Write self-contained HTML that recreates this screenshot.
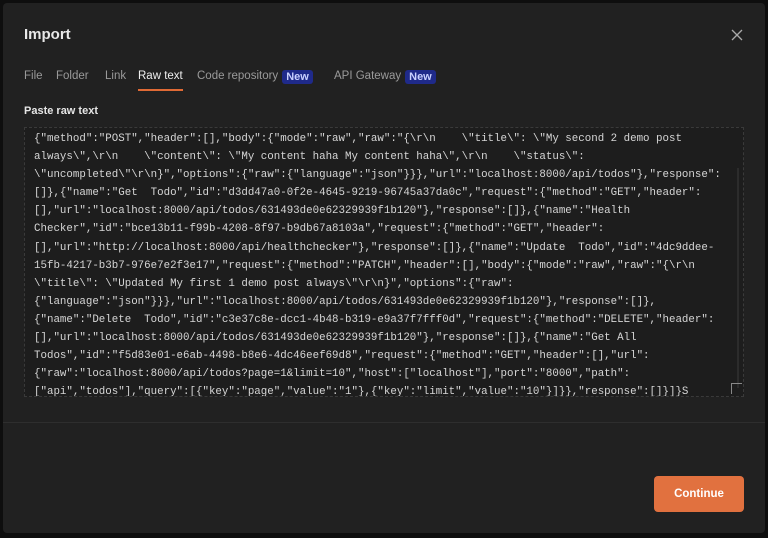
<!DOCTYPE html>
<html><head><meta charset="utf-8"><style>
html,body{margin:0;padding:0;width:768px;height:538px;background:#0e0e0e;overflow:hidden;font-family:"Liberation Sans",sans-serif}
.dlg{position:absolute;left:3px;top:3px;width:762px;height:530px;background:#212121;border-radius:4px}
.title{position:absolute;left:21px;top:23px;font-size:15px;font-weight:bold;color:#e8e8e8}
.close{position:absolute;left:726px;top:24px;width:16px;height:16px}
.tabs{position:absolute;left:21px;top:67px;font-size:11.5px;color:#9a9a9a;white-space:nowrap}
.tabs span{position:absolute;top:0}
.badge{background:#1f2a8a;color:#c9d0ff;font-weight:bold;padding:1px 4px;border-radius:3px;font-size:11px;margin-left:4px}
.ul{position:absolute;left:135px;top:86px;width:45px;height:2px;background:#e06a35}
.lbl{position:absolute;left:21px;top:102px;font-size:11px;font-weight:bold;color:#e6e6e6}
.ta{position:absolute;left:24px;top:127px;width:718px;height:268px;border:1px dashed #3a3a3a;background:#1d1d1d;overflow:hidden}
.code{position:absolute;left:9px;top:2px;margin:0;font-family:"Liberation Mono",monospace;font-size:10.8px;line-height:18.1px;color:#d6d6d6;white-space:pre}
.sb{position:absolute;left:712px;top:40px;width:2px;height:220px;background:#2c2c2c}
.rs{position:absolute;left:706px;top:255px;width:10px;height:10px;border-left:1px solid #888;border-top:1px solid #888}
.div{position:absolute;left:0;top:419px;width:762px;height:1px;background:#2e2e2e}
.btn{position:absolute;left:651px;top:473px;width:90px;height:36px;background:#e1713f;border-radius:4px;color:#fff;font-weight:bold;font-size:11.5px;text-align:center;line-height:36px}
</style></head><body>
<div class="dlg">
<div class="title">Import</div>
<svg class="close" viewBox="0 0 16 16"><path d="M3 3L13 13M13 3L3 13" stroke="#aaa" stroke-width="1.3"/></svg>
<div class="tabs">
<span style="left:0">File</span><span style="left:32px">Folder</span><span style="left:81px">Link</span>
<span style="left:114px;color:#eee">Raw text</span>
<span style="left:173px">Code repository<span class="badge">New</span></span>
<span style="left:310px">API Gateway<span class="badge">New</span></span>
</div>
<div class="ul"></div>
<div class="lbl">Paste raw text</div>
<div class="div"></div>
<div class="btn">Continue</div>
</div>
<div class="ta"><pre class="code">{"method":"POST","header":[],"body":{"mode":"raw","raw":"{\r\n    \"title\": \"My second 2 demo post
always\",\r\n    \"content\": \"My content haha My content haha\",\r\n    \"status\":
\"uncompleted\"\r\n}","options":{"raw":{"language":"json"}}},"url":"localhost:8000/api/todos"},"response":
[]},{"name":"Get  Todo","id":"d3dd47a0-0f2e-4645-9219-96745a37da0c","request":{"method":"GET","header":
[],"url":"localhost:8000/api/todos/631493de0e62329939f1b120"},"response":[]},{"name":"Health
Checker","id":"bce13b11-f99b-4208-8f97-b9db67a8103a","request":{"method":"GET","header":
[],"url":"http://localhost:8000/api/healthchecker"},"response":[]},{"name":"Update  Todo","id":"4dc9ddee-
15fb-4217-b3b7-976e7e2f3e17","request":{"method":"PATCH","header":[],"body":{"mode":"raw","raw":"{\r\n
\"title\": \"Updated My first 1 demo post always\"\r\n}","options":{"raw":
{"language":"json"}}},"url":"localhost:8000/api/todos/631493de0e62329939f1b120"},"response":[]},
{"name":"Delete  Todo","id":"c3e37c8e-dcc1-4b48-b319-e9a37f7fff0d","request":{"method":"DELETE","header":
[],"url":"localhost:8000/api/todos/631493de0e62329939f1b120"},"response":[]},{"name":"Get All
Todos","id":"f5d83e01-e6ab-4498-b8e6-4dc46eef69d8","request":{"method":"GET","header":[],"url":
{"raw":"localhost:8000/api/todos?page=1&amp;limit=10","host":["localhost"],"port":"8000","path":
["api","todos"],"query":[{"key":"page","value":"1"},{"key":"limit","value":"10"}]}},"response":[]}]}S</pre>
<div class="sb"></div><div class="rs"></div></div>
</body></html>
